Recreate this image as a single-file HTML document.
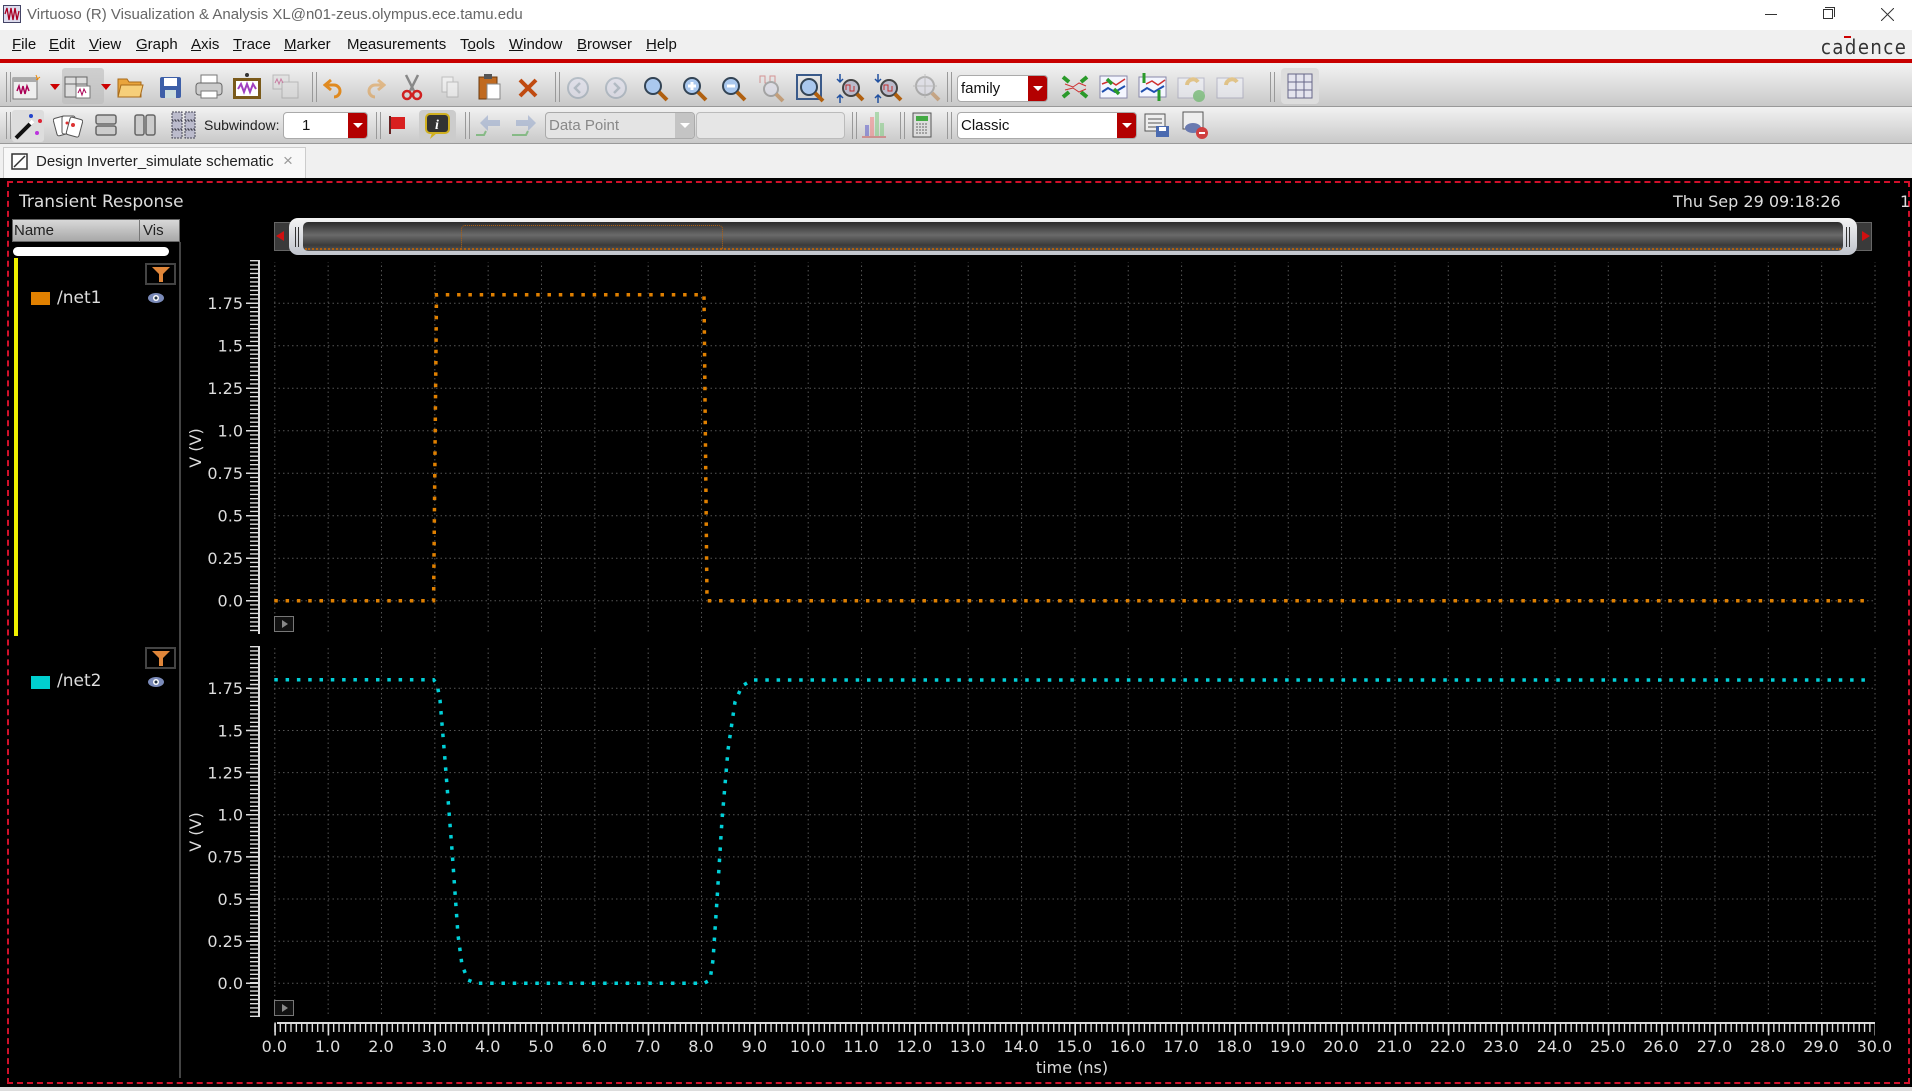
<!DOCTYPE html>
<html><head><meta charset="utf-8">
<style>
*{margin:0;padding:0;box-sizing:border-box}
body{width:1912px;height:1091px;overflow:hidden;background:#f0f0f0;font-family:"Liberation Sans",sans-serif;position:relative}
.a{position:absolute}
.menu span{position:absolute;top:36px;font-size:15px;color:#111}
.tb{position:absolute;left:0;width:1912px;background:linear-gradient(#f2f2f2,#c9c9c9);border-bottom:1px solid #999}
.ic{position:absolute}
.sep{position:absolute;width:5px;border-left:1px solid #999;border-right:1px solid #999}
.combo{position:absolute;background:#fff;border:1px solid #aaa;border-radius:4px;font-size:15px;padding-left:3px;line-height:25px;color:#111}
.combo .dd{position:absolute;right:0;top:0;bottom:0;width:19px;background:#b30000;border-radius:0 3px 3px 0}
.combo .dd:after{content:"";position:absolute;left:5px;top:10px;border-left:5px solid transparent;border-right:5px solid transparent;border-top:5px solid #fff}
.pt{font-family:"DejaVu Sans","Liberation Sans",sans-serif;fill:#ddd;font-size:16px}
</style></head><body>
<!-- title bar -->
<div class="a" style="left:0;top:0;width:1912px;height:30px;background:#fff"></div>
<svg class="a" style="left:3px;top:5px" width="18" height="18"><rect x="0.5" y="0.5" width="17" height="17" fill="#dde" stroke="#446"/><path d="M2 9 L4 3 L6 15 L8 3 L10 15 L12 3 L14 15 L16 6" stroke="#a02" fill="none" stroke-width="1.3"/></svg>
<div class="a" style="left:27px;top:6px;font-size:15px;color:#666">Virtuoso (R) Visualization &amp; Analysis XL@n01-zeus.olympus.ece.tamu.edu</div>
<div class="a" style="left:1765px;top:14px;width:12px;height:1px;background:#333"></div>
<div class="a" style="left:1823px;top:9px;width:10px;height:10px;border:1px solid #333"></div>
<div class="a" style="left:1825px;top:7px;width:10px;height:10px;border-top:1px solid #333;border-right:1px solid #333"></div>
<svg class="a" style="left:1881px;top:8px" width="13" height="13"><path d="M0 0L13 13M13 0L0 13" stroke="#333"/></svg>
<!-- menu -->
<div class="menu">
<span style="left:12px"><u>F</u>ile</span><span style="left:49px"><u>E</u>dit</span><span style="left:89px"><u>V</u>iew</span><span style="left:136px"><u>G</u>raph</span><span style="left:191px"><u>A</u>xis</span><span style="left:233px"><u>T</u>race</span><span style="left:284px"><u>M</u>arker</span><span style="left:347px">M<u>e</u>asurements</span><span style="left:460px">T<u>o</u>ols</span><span style="left:509px"><u>W</u>indow</span><span style="left:577px"><u>B</u>rowser</span><span style="left:646px"><u>H</u>elp</span>
</div>
<div class="a" style="left:1821px;top:35px;font-size:20px;letter-spacing:1.5px;color:#333;font-family:'DejaVu Sans Condensed','DejaVu Sans',sans-serif">cadence</div>
<div class="a" style="left:1844px;top:36px;width:7px;height:2px;background:#c00"></div>
<div class="a" style="left:0;top:59px;width:1912px;height:4px;background:#c80000"></div>
<!-- toolbars -->
<div class="tb" style="top:64px;height:43px"></div>
<div class="tb" style="top:107px;height:37px"></div>
<div class="a" style="left:0;top:144px;width:1912px;height:34px;background:#f0f0f0"></div>
<!-- toolbar1 icons -->
<div class="sep" style="left:6px;top:72px;height:30px"></div>
<svg class="ic" style="left:12px;top:74px" width="30" height="28"><rect x="1" y="4" width="24" height="21" fill="#eee" stroke="#777"/><rect x="1" y="4" width="24" height="4" fill="#aaa"/><path d="M5 17 l2-5 2 8 2-8 2 8 2-8 2 5" stroke="#a05" fill="none" stroke-width="1.5"/><path d="M24 1l2 5M28 3l-4 3" stroke="#e80"/></svg>
<svg class="ic" style="left:50px;top:84px" width="10" height="8"><path d="M0 0h10L5 6z" fill="#c00"/></svg>
<div class="a" style="left:62px;top:68px;width:42px;height:36px;background:#bbb;border-radius:3px;opacity:.6"></div>
<svg class="ic" style="left:64px;top:74px" width="30" height="28"><rect x="1" y="3" width="22" height="20" fill="#ddd" stroke="#666"/><path d="M1 10h22M12 3v20" stroke="#666"/><rect x="12" y="12" width="14" height="12" fill="#fff" stroke="#777"/><path d="M14 19l2-4 2 6 2-6 2 4" stroke="#a05" fill="none"/></svg>
<svg class="ic" style="left:101px;top:84px" width="10" height="8"><path d="M0 0h10L5 6z" fill="#c00"/></svg>
<svg class="ic" style="left:117px;top:75px" width="28" height="24"><path d="M1 4h9l2 3h12v15H1z" fill="#e9a43c" stroke="#a86a1a"/><path d="M4 10h22l-3 12H1z" fill="#f6cf7a" stroke="#a86a1a"/></svg>
<svg class="ic" style="left:159px;top:76px" width="24" height="24"><rect x="1" y="1" width="21" height="21" rx="2" fill="#3d5fa8"/><rect x="5" y="2" width="13" height="8" fill="#fff"/><rect x="6" y="14" width="11" height="8" fill="#cdd"/></svg>
<svg class="ic" style="left:195px;top:74px" width="28" height="26"><rect x="6" y="1" width="16" height="9" fill="#fff" stroke="#777"/><rect x="1" y="9" width="26" height="12" rx="3" fill="#ccc" stroke="#666"/><rect x="6" y="17" width="16" height="7" fill="#fff" stroke="#777"/></svg>
<svg class="ic" style="left:231px;top:72px" width="32" height="30"><rect x="2" y="6" width="28" height="21" fill="#7a5a1a"/><rect x="5" y="9" width="22" height="15" fill="#fff"/><path d="M7 17l3-5 3 8 3-8 3 8 3-8 3 5" stroke="#a040c0" fill="none" stroke-width="2"/><circle cx="16" cy="3" r="2" fill="#333"/></svg>
<svg class="ic" style="left:272px;top:74px" width="28" height="26" opacity=".45"><rect x="1" y="1" width="16" height="14" fill="#ddd" stroke="#888"/><rect x="10" y="8" width="16" height="16" fill="#ddd" stroke="#888"/><path d="M3 9l2-4 2 5 2-5 2 4" stroke="#a05" fill="none"/></svg>
<div class="sep" style="left:312px;top:72px;height:30px"></div>
<svg class="ic" style="left:323px;top:77px" width="22" height="22"><path d="M8 3L2 8l6 5" stroke="#e08a20" fill="none" stroke-width="3"/><path d="M3 8h8a6 6 0 0 1 0 12" stroke="#e08a20" fill="none" stroke-width="3"/></svg>
<svg class="ic" style="left:364px;top:77px" width="22" height="22" opacity=".45"><path d="M14 3l6 5-6 5" stroke="#e08a20" fill="none" stroke-width="3"/><path d="M19 8h-8a6 6 0 0 0 0 12" stroke="#e08a20" fill="none" stroke-width="3"/></svg>
<svg class="ic" style="left:400px;top:74px" width="24" height="28"><path d="M6 1l8 16M18 1l-8 16" stroke="#888" stroke-width="2.5"/><circle cx="7" cy="21" r="4" fill="none" stroke="#d02020" stroke-width="2.5"/><circle cx="17" cy="21" r="4" fill="none" stroke="#d02020" stroke-width="2.5"/></svg>
<svg class="ic" style="left:441px;top:76px" width="20" height="24" opacity=".4"><rect x="1" y="1" width="11" height="15" fill="#fff" stroke="#888"/><rect x="6" y="6" width="11" height="15" fill="#fff" stroke="#888"/></svg>
<svg class="ic" style="left:477px;top:73px" width="26" height="28"><rect x="2" y="4" width="18" height="22" fill="#c06a20" stroke="#6a3a10"/><rect x="7" y="1" width="8" height="5" fill="#555"/><rect x="10" y="11" width="13" height="15" fill="#fff" stroke="#888"/></svg>
<svg class="ic" style="left:517px;top:77px" width="22" height="22"><path d="M3 3l16 16M19 3L3 19" stroke="#c04a10" stroke-width="4"/></svg>
<div class="sep" style="left:555px;top:72px;height:30px"></div>
<svg class="ic" style="left:566px;top:76px" width="24" height="24" opacity=".5"><circle cx="12" cy="12" r="10" fill="#dde" stroke="#89a" stroke-width="2"/><path d="M14 7l-5 5 5 5" stroke="#89a" fill="none" stroke-width="2.5"/></svg>
<svg class="ic" style="left:604px;top:76px" width="24" height="24" opacity=".5"><circle cx="12" cy="12" r="10" fill="#dde" stroke="#89a" stroke-width="2"/><path d="M10 7l5 5-5 5" stroke="#89a" fill="none" stroke-width="2.5"/></svg>
<svg class="ic" style="left:642px;top:75px" width="28" height="28"><circle cx="11" cy="11" r="8" fill="#aac8ee" stroke="#345" stroke-width="2"/><path d="M17 17l8 8" stroke="#b06010" stroke-width="4"/></svg>
<svg class="ic" style="left:681px;top:75px" width="28" height="28"><circle cx="11" cy="11" r="8" fill="#aac8ee" stroke="#345" stroke-width="2"/><path d="M7 11h8M11 7v8" stroke="#fff" stroke-width="3"/><path d="M17 17l8 8" stroke="#b06010" stroke-width="4"/></svg>
<svg class="ic" style="left:720px;top:75px" width="28" height="28"><circle cx="11" cy="11" r="8" fill="#aac8ee" stroke="#345" stroke-width="2"/><path d="M7 11h8" stroke="#fff" stroke-width="3"/><path d="M17 17l8 8" stroke="#b06010" stroke-width="4"/></svg>
<svg class="ic" style="left:758px;top:73px" width="30" height="30" opacity=".45"><path d="M2 10V3h5v7h5V3h5v7" stroke="#c03030" fill="none"/><circle cx="13" cy="16" r="7" fill="#dde" stroke="#666" stroke-width="2"/><path d="M18 21l7 7" stroke="#b06010" stroke-width="4"/></svg>
<svg class="ic" style="left:796px;top:74px" width="30" height="30"><rect x="1" y="1" width="24" height="24" fill="none" stroke="#3a5a8a" stroke-width="2"/><circle cx="13" cy="13" r="8" fill="#aac8ee" stroke="#345" stroke-width="2"/><path d="M19 19l8 8" stroke="#b06010" stroke-width="4"/></svg>
<svg class="ic" style="left:835px;top:73px" width="30" height="30"><path d="M5 1v8M5 30v-8M2 6l3 3 3-3M2 25l3-3 3 3" stroke="#2050a0" fill="none" stroke-width="1.5"/><circle cx="16" cy="15" r="8" fill="#bbc" stroke="#444" stroke-width="2"/><path d="M11 17v-5h4v6h4v-5" stroke="#c03030" fill="none"/><path d="M22 21l6 6" stroke="#b06010" stroke-width="4"/></svg>
<svg class="ic" style="left:873px;top:73px" width="30" height="30"><path d="M5 1v8M5 30v-8M2 6l3 3 3-3M2 25l3-3 3 3" stroke="#2050a0" fill="none" stroke-width="1.5"/><circle cx="16" cy="15" r="8" fill="#bbc" stroke="#444" stroke-width="2"/><path d="M11 17v-5h4v6h4v-5" stroke="#c03030" fill="none"/><path d="M22 21l6 6" stroke="#b06010" stroke-width="4"/></svg>
<svg class="ic" style="left:912px;top:73px" width="30" height="30" opacity=".4"><circle cx="13" cy="13" r="9" fill="#dde" stroke="#666" stroke-width="2"/><path d="M13 1v24M1 13h24" stroke="#888"/><path d="M20 20l7 7" stroke="#b06010" stroke-width="4"/></svg>
<div class="sep" style="left:947px;top:72px;height:30px"></div>
<div class="combo" style="left:957px;top:75px;width:91px;height:27px">family<div class="dd"></div></div>
<svg class="ic" style="left:1060px;top:74px" width="30" height="26"><path d="M3 3l6 5M27 3l-6 5M3 23l6-5M27 23l-6-5" stroke="#2a9a2a" stroke-width="4"/><path d="M5 10l8 3 6-4 7 3M5 16l8-2 6 4 7-3" stroke="#c33" fill="none"/></svg>
<svg class="ic" style="left:1099px;top:74px" width="30" height="26"><rect x="1" y="2" width="27" height="22" fill="#f4f6ff" stroke="#88a"/><path d="M3 18l6-4 7 4 10-6" stroke="#2050b0" fill="none" stroke-width="2"/><path d="M3 10l8-3 6 4 9-6" stroke="#d03030" fill="none" stroke-width="1.5"/><path d="M8 5l5 5M20 20l-5-5" stroke="#2a9a2a" stroke-width="3.5"/></svg>
<svg class="ic" style="left:1138px;top:72px" width="30" height="30"><rect x="1" y="5" width="27" height="20" fill="#f4f6ff" stroke="#88a"/><path d="M3 20l6-4 7 4 10-6" stroke="#2050b0" fill="none" stroke-width="2"/><path d="M8 12l6-3 6 4 7-5" stroke="#d03030" fill="none" stroke-width="1.5"/><path d="M6 1v10M21 18v11" stroke="#2a9a2a" stroke-width="3"/></svg>
<svg class="ic" style="left:1177px;top:73px" width="30" height="30" opacity=".45"><rect x="1" y="5" width="26" height="20" fill="#f4f6ff" stroke="#88a"/><path d="M10 12a6 6 0 0 1 11-3" stroke="#e0a020" fill="none" stroke-width="4"/><circle cx="22" cy="23" r="6" fill="#3a3"/></svg>
<svg class="ic" style="left:1216px;top:73px" width="30" height="30" opacity=".45"><rect x="1" y="5" width="26" height="20" fill="#f4f6ff" stroke="#88a"/><path d="M10 12a6 6 0 0 1 11-3" stroke="#e0a020" fill="none" stroke-width="4"/></svg>
<div class="sep" style="left:1270px;top:72px;height:30px"></div>
<div class="a" style="left:1281px;top:68px;width:38px;height:36px;background:#ddd;border-radius:4px"></div>
<svg class="ic" style="left:1287px;top:73px" width="26" height="26"><rect x="1" y="1" width="24" height="24" fill="#e4e4ee" stroke="#668"/><path d="M9 1v24M17 1v24M1 9h24M1 17h24" stroke="#668"/></svg>
<!-- toolbar2 -->
<div class="sep" style="left:6px;top:112px;height:27px"></div>
<div class="a" style="left:12px;top:110px;width:32px;height:32px;background:#ddd;border-radius:3px"></div>
<svg class="ic" style="left:13px;top:111px" width="30" height="30"><path d="M3 27L19 11" stroke="#111" stroke-width="4"/><path d="M17 13l3-3" stroke="#fff" stroke-width="4"/><circle cx="18" cy="5" r="2" fill="#24c"/><circle cx="27" cy="10" r="2" fill="#d23"/><circle cx="24" cy="22" r="2" fill="#b3d"/></svg>
<svg class="ic" style="left:53px;top:111px" width="30" height="30"><rect x="2" y="6" width="13" height="18" rx="2" fill="#fff" stroke="#555" transform="rotate(-15 8 15)"/><rect x="9" y="5" width="13" height="18" rx="2" fill="#fff" stroke="#555"/><rect x="15" y="7" width="13" height="18" rx="2" fill="#fff" stroke="#555" transform="rotate(15 21 16)"/><circle cx="20" cy="14" r="2" fill="#d33"/><circle cx="14" cy="12" r="1.5" fill="#d33"/></svg>
<svg class="ic" style="left:94px;top:113px" width="24" height="24"><rect x="2" y="2" width="20" height="9" rx="2" fill="#ccc" stroke="#666" stroke-width="1.5"/><rect x="2" y="13" width="20" height="9" rx="2" fill="#ccc" stroke="#666" stroke-width="1.5"/></svg>
<svg class="ic" style="left:133px;top:113px" width="24" height="24"><rect x="2" y="2" width="9" height="20" rx="2" fill="#ccc" stroke="#666" stroke-width="1.5"/><rect x="13" y="2" width="9" height="20" rx="2" fill="#ccc" stroke="#666" stroke-width="1.5"/></svg>
<svg class="ic" style="left:171px;top:111px" width="26" height="28"><g fill="#bbc" stroke="#445" stroke-dasharray="2 1"><rect x="1" y="1" width="10" height="8"/><rect x="14" y="1" width="10" height="8"/><rect x="1" y="10" width="10" height="8"/><rect x="14" y="10" width="10" height="8"/><rect x="1" y="19" width="10" height="8"/><rect x="14" y="19" width="10" height="8"/></g></svg>
<div class="a" style="left:204px;top:117px;font-size:14px;color:#222">Subwindow:</div>
<div class="combo" style="left:283px;top:112px;width:85px;height:27px;padding-left:18px">1<div class="dd"></div></div>
<div class="sep" style="left:376px;top:112px;height:27px"></div>
<svg class="ic" style="left:388px;top:114px" width="20" height="22"><path d="M2 2v18" stroke="#622" stroke-width="2"/><path d="M3 3h14v12H3z" fill="#d82020"/></svg>
<div class="a" style="left:419px;top:110px;width:37px;height:32px;background:#ccc;border-radius:4px"></div>
<svg class="ic" style="left:424px;top:112px" width="28" height="28"><rect x="2" y="2" width="23" height="19" rx="4" fill="#333" stroke="#d0b020" stroke-width="2"/><path d="M8 21l-2 6 7-6" fill="#d0b020"/><text x="11" y="17" fill="#fff" font-size="14" font-style="italic" font-weight="bold" font-family="Liberation Serif">i</text></svg>
<div class="sep" style="left:465px;top:112px;height:27px"></div>
<svg class="ic" style="left:474px;top:113px" width="30" height="26" opacity=".6"><path d="M2 22h8l2-4" stroke="#5a5" fill="none" stroke-width="2"/><path d="M6 10l8-8v5h12v6H14v5z" fill="#9ac" /></svg>
<svg class="ic" style="left:510px;top:113px" width="30" height="26" opacity=".6"><path d="M2 22h14l2-4" stroke="#5a5" fill="none" stroke-width="2"/><path d="M26 10l-8-8v5H6v6h12v5z" fill="#9ac" /></svg>
<div class="combo" style="left:545px;top:112px;width:150px;height:27px;background:#e4e4e4;color:#888">Data Point<div class="dd" style="background:#c4c4c4"></div></div>
<div class="a" style="left:696px;top:112px;width:149px;height:27px;background:#e6e6e6;border:1px solid #bbb;border-radius:4px"></div>
<div class="sep" style="left:852px;top:112px;height:27px"></div>
<svg class="ic" style="left:862px;top:111px" width="24" height="28" opacity=".6"><rect x="3" y="14" width="4" height="11" fill="#66c"/><rect x="8" y="6" width="4" height="19" fill="#e88"/><rect x="13" y="1" width="4" height="24" fill="#8c8"/><rect x="18" y="12" width="4" height="13" fill="#8c8"/><path d="M0 26h24" stroke="#c66" stroke-width="2"/></svg>
<div class="sep" style="left:900px;top:112px;height:27px"></div>
<svg class="ic" style="left:912px;top:112px" width="20" height="26"><rect x="1" y="1" width="18" height="24" fill="#ddd" stroke="#555"/><rect x="4" y="4" width="12" height="5" fill="#4a4"/><path d="M4 12h12M4 15h12M4 18h12M4 21h12" stroke="#666" stroke-dasharray="2 1"/></svg>
<div class="sep" style="left:947px;top:112px;height:27px"></div>
<div class="combo" style="left:957px;top:112px;width:180px;height:27px">Classic<div class="dd"></div></div>
<svg class="ic" style="left:1144px;top:113px" width="28" height="26"><rect x="1" y="1" width="20" height="17" fill="#eee" stroke="#555"/><path d="M4 6h14M4 10h14M4 14h10" stroke="#555"/><rect x="12" y="13" width="13" height="11" fill="#4a6ab0"/><rect x="15" y="14" width="7" height="4" fill="#fff"/></svg>
<svg class="ic" style="left:1182px;top:111px" width="28" height="30"><rect x="1" y="1" width="20" height="17" fill="#eee" stroke="#555"/><ellipse cx="11" cy="17" rx="8" ry="5" fill="#6a7ab0"/><circle cx="20" cy="22" r="6" fill="#d04040"/><path d="M17 22h6" stroke="#fff" stroke-width="2"/></svg>
<!-- tab -->
<div class="a" style="left:3px;top:147px;width:303px;height:31px;background:#f8f8f8;border:1px solid #ccc;border-bottom:none"></div>
<svg class="ic" style="left:11px;top:153px" width="18" height="18"><rect x="1" y="1" width="15" height="15" fill="#fff" stroke="#333" stroke-width="1.5"/><path d="M3 14L14 3" stroke="#333" stroke-width="1.5"/></svg>
<div class="a" style="left:36px;top:153px;font-size:15px;color:#222">Design Inverter_simulate schematic</div>
<div class="a" style="left:283px;top:151px;font-size:17px;color:#999">×</div>
<!-- main black -->
<div class="a" style="left:0;top:178px;width:1912px;height:913px;background:#000"></div>
<div class="a" style="left:0;top:1087px;width:1912px;height:4px;background:#ddd"></div>
<div class="a" style="left:7px;top:181px;width:1903px;height:903px;border:2px dashed #d0102a"></div>
<div class="a" style="left:19px;top:192px;font-size:17px;color:#ddd;font-family:'DejaVu Sans',sans-serif">Transient Response</div>
<div class="a" style="left:1673px;top:192px;font-size:16px;color:#ddd;font-family:'DejaVu Sans',sans-serif">Thu Sep 29 09:18:26</div>
<div class="a" style="left:1900px;top:192px;font-size:16px;color:#ddd;font-family:'DejaVu Sans',sans-serif">1</div>
<!-- left panel -->
<div class="a" style="left:12px;top:219px;width:168px;height:23px;background:linear-gradient(#d8d8d8,#a8a8a8);border:1px solid #666"></div>
<div class="a" style="left:139px;top:219px;width:1px;height:23px;background:#777"></div>
<div class="a" style="left:14px;top:222px;font-size:15px;color:#222">Name</div>
<div class="a" style="left:143px;top:222px;font-size:15px;color:#222">Vis</div>
<div class="a" style="left:179px;top:242px;width:2px;height:836px;background:#444"></div>
<div class="a" style="left:13px;top:247px;width:156px;height:9px;background:#fff;border-radius:5px"></div>
<div class="a" style="left:14px;top:258px;width:4px;height:378px;background:#f0f000"></div>
<div class="a" style="left:145px;top:263px;width:31px;height:22px;border:2px solid #444"></div>
<svg class="ic" style="left:151px;top:266px" width="20" height="17"><path d="M1 1h18l-7 7v8h-4V8z" fill="#e0863a"/></svg>
<div class="a" style="left:31px;top:292px;width:19px;height:13px;background:#e08000"></div>
<div class="a" style="left:57px;top:288px;font-size:17px;color:#ddd;font-family:'DejaVu Sans',sans-serif">/net1</div>
<svg class="ic" style="left:147px;top:292px" width="18" height="12"><ellipse cx="9" cy="6" rx="8" ry="5" fill="#7a8ab8"/><circle cx="9" cy="6" r="3" fill="#fff"/><circle cx="9" cy="6" r="1.5" fill="#234"/></svg>
<div class="a" style="left:145px;top:647px;width:31px;height:22px;border:2px solid #444"></div>
<svg class="ic" style="left:151px;top:650px" width="20" height="17"><path d="M1 1h18l-7 7v8h-4V8z" fill="#e0863a"/></svg>
<div class="a" style="left:31px;top:676px;width:19px;height:13px;background:#00d0d0"></div>
<div class="a" style="left:57px;top:671px;font-size:17px;color:#ddd;font-family:'DejaVu Sans',sans-serif">/net2</div>
<svg class="ic" style="left:147px;top:676px" width="18" height="12"><ellipse cx="9" cy="6" rx="8" ry="5" fill="#7a8ab8"/><circle cx="9" cy="6" r="3" fill="#fff"/><circle cx="9" cy="6" r="1.5" fill="#234"/></svg>
<!-- scrollbar -->
<div class="a" style="left:274px;top:222px;width:20px;height:29px;background:#3a3a3a;border:1px solid #666"></div>
<svg class="ic" style="left:276px;top:231px" width="8" height="10"><path d="M8 0v10L0 5z" fill="#d01010"/></svg>
<div class="a" style="left:1852px;top:222px;width:20px;height:29px;background:#3a3a3a;border:1px solid #666"></div>
<svg class="ic" style="left:1862px;top:231px" width="8" height="10"><path d="M0 0v10L8 5z" fill="#d01010"/></svg>
<div class="a" style="left:289px;top:218px;width:1568px;height:37px;background:linear-gradient(#f4f4f4,#c0c4cc);border-radius:9px"></div>
<div class="a" style="left:303px;top:222px;width:1540px;height:29px;background:linear-gradient(#2a2a2a,#6a6a6a 45%,#3a3a3a 80%,#555);border-radius:5px"></div>
<div class="a" style="left:305px;top:248px;width:1536px;height:2px;border-top:2px dotted #b06010"></div>
<div class="a" style="left:461px;top:225px;width:262px;height:24px;border:1px dotted #b06010;border-bottom:none;border-radius:4px 4px 0 0"></div>
<div class="a" style="left:295px;top:227px;width:4px;height:20px;border-left:1px solid #333;border-right:1px solid #333"></div>
<div class="a" style="left:1846px;top:227px;width:4px;height:20px;border-left:1px solid #333;border-right:1px solid #333"></div>
<!-- plots -->
<svg class="a" style="left:0;top:0" width="1912" height="1091">
<defs>
<pattern id="vg" x="274.3" y="0" width="53.34" height="1091" patternUnits="userSpaceOnUse"><line x1="0.5" y1="0" x2="0.5" y2="1091" stroke="#555" stroke-dasharray="1.5 3"/></pattern>
</defs>
<rect x="273" y="262" width="1603" height="372" fill="url(#vg)"/>
<rect x="273" y="647" width="1603" height="368" fill="url(#vg)"/>
<g stroke="#555" stroke-dasharray="1.5 3">
<line x1="274" x2="1874" y1="600.7" y2="600.7"/><line x1="274" x2="1874" y1="558.2" y2="558.2"/><line x1="274" x2="1874" y1="515.7" y2="515.7"/><line x1="274" x2="1874" y1="473.2" y2="473.2"/><line x1="274" x2="1874" y1="430.7" y2="430.7"/><line x1="274" x2="1874" y1="388.2" y2="388.2"/><line x1="274" x2="1874" y1="345.7" y2="345.7"/><line x1="274" x2="1874" y1="303.2" y2="303.2"/>
<line x1="274" x2="1874" y1="983.3" y2="983.3"/><line x1="274" x2="1874" y1="941.2" y2="941.2"/><line x1="274" x2="1874" y1="899" y2="899"/><line x1="274" x2="1874" y1="856.9" y2="856.9"/><line x1="274" x2="1874" y1="814.7" y2="814.7"/><line x1="274" x2="1874" y1="772.6" y2="772.6"/><line x1="274" x2="1874" y1="730.5" y2="730.5"/><line x1="274" x2="1874" y1="688.3" y2="688.3"/>
</g>
<g stroke="#ddd">
<line x1="259" y1="260" x2="259" y2="634" stroke-width="2"/>
<line x1="254" y1="260" x2="254" y2="634" stroke-width="8" stroke-dasharray="1.4 2.85"/>
<line x1="259" y1="646" x2="259" y2="1017" stroke-width="2"/>
<line x1="254" y1="646" x2="254" y2="1017" stroke-width="8" stroke-dasharray="1.4 2.8"/>
<line x1="277" y1="1023" x2="1875" y2="1023" stroke-width="2"/>
<line x1="274.3" y1="1028" x2="1875" y2="1028" stroke-width="8" stroke-dasharray="1.4 3.934"/>
</g>
<g stroke="#ddd" stroke-width="1.5">
<path d="M246 600.7h12M246 558.2h12M246 515.7h12M246 473.2h12M246 430.7h12M246 388.2h12M246 345.7h12M246 303.2h12"/>
<path d="M246 983.3h12M246 941.2h12M246 899h12M246 856.9h12M246 814.7h12M246 772.6h12M246 730.5h12M246 688.3h12"/>
</g>
<g class="pt" text-anchor="end" font-size="16">
<text x="243" y="606.5">0.0</text><text x="243" y="564">0.25</text><text x="243" y="521.5">0.5</text><text x="243" y="479">0.75</text><text x="243" y="436.5">1.0</text><text x="243" y="394">1.25</text><text x="243" y="351.5">1.5</text><text x="243" y="309">1.75</text>
<text x="243" y="989">0.0</text><text x="243" y="947">0.25</text><text x="243" y="905">0.5</text><text x="243" y="862.7">0.75</text><text x="243" y="820.5">1.0</text><text x="243" y="778.4">1.25</text><text x="243" y="736.3">1.5</text><text x="243" y="694">1.75</text>
</g>
<text class="pt" transform="translate(201 448) rotate(-90)" text-anchor="middle" font-size="16">V (V)</text>
<text class="pt" transform="translate(201 832) rotate(-90)" text-anchor="middle" font-size="16">V (V)</text>
<rect x="274.5" y="616.5" width="19" height="15" fill="#111" stroke="#777"/><path d="M282 620v8l6-4z" fill="#888"/>
<rect x="274.5" y="1000.5" width="19" height="15" fill="#111" stroke="#777"/><path d="M282 1004v8l6-4z" fill="#888"/>
<g class="pt" text-anchor="middle" font-size="16">
<text x="274.3" y="1052">0.0</text><text x="327.6" y="1052">1.0</text><text x="381" y="1052">2.0</text><text x="434.3" y="1052">3.0</text><text x="487.7" y="1052">4.0</text><text x="541" y="1052">5.0</text><text x="594.3" y="1052">6.0</text><text x="647.7" y="1052">7.0</text><text x="701" y="1052">8.0</text><text x="754.4" y="1052">9.0</text><text x="807.7" y="1052">10.0</text><text x="861" y="1052">11.0</text><text x="914.4" y="1052">12.0</text><text x="967.7" y="1052">13.0</text><text x="1021" y="1052">14.0</text><text x="1074.4" y="1052">15.0</text><text x="1127.7" y="1052">16.0</text><text x="1181" y="1052">17.0</text><text x="1234.4" y="1052">18.0</text><text x="1287.8" y="1052">19.0</text><text x="1341" y="1052">20.0</text><text x="1394.4" y="1052">21.0</text><text x="1447.8" y="1052">22.0</text><text x="1501" y="1052">23.0</text><text x="1554.5" y="1052">24.0</text><text x="1607.8" y="1052">25.0</text><text x="1661" y="1052">26.0</text><text x="1714.5" y="1052">27.0</text><text x="1767.8" y="1052">28.0</text><text x="1821" y="1052">29.0</text><text x="1874.4" y="1052">30.0</text>
<text x="1072" y="1073">time (ns)</text>
</g>
<line x1="274.3" y1="1023" x2="1875" y2="1023" stroke="#ddd" stroke-width="13" stroke-dasharray="1.6 51.74" transform="translate(0 6)"/>
<polyline points="274.3,600.7 433.6,600.7 436.5,294.7 704,294.7 707,600.7 1867,600.7" fill="none" stroke="#e08000" stroke-width="3.5" stroke-dasharray="3.5 7.8"/>
<polyline points="274.3,679.8 433.6,679.8 437,684 440,700 445,760 452,850 458,935 462,965 468,980 476,983.3 704,983.3 710,980 713,960 717,900 722,820 728,750 735,702 742,686 752,680 1867,680" fill="none" stroke="#00d0d8" stroke-width="3.5" stroke-dasharray="3.5 7.8"/>
</svg>
</body></html>
